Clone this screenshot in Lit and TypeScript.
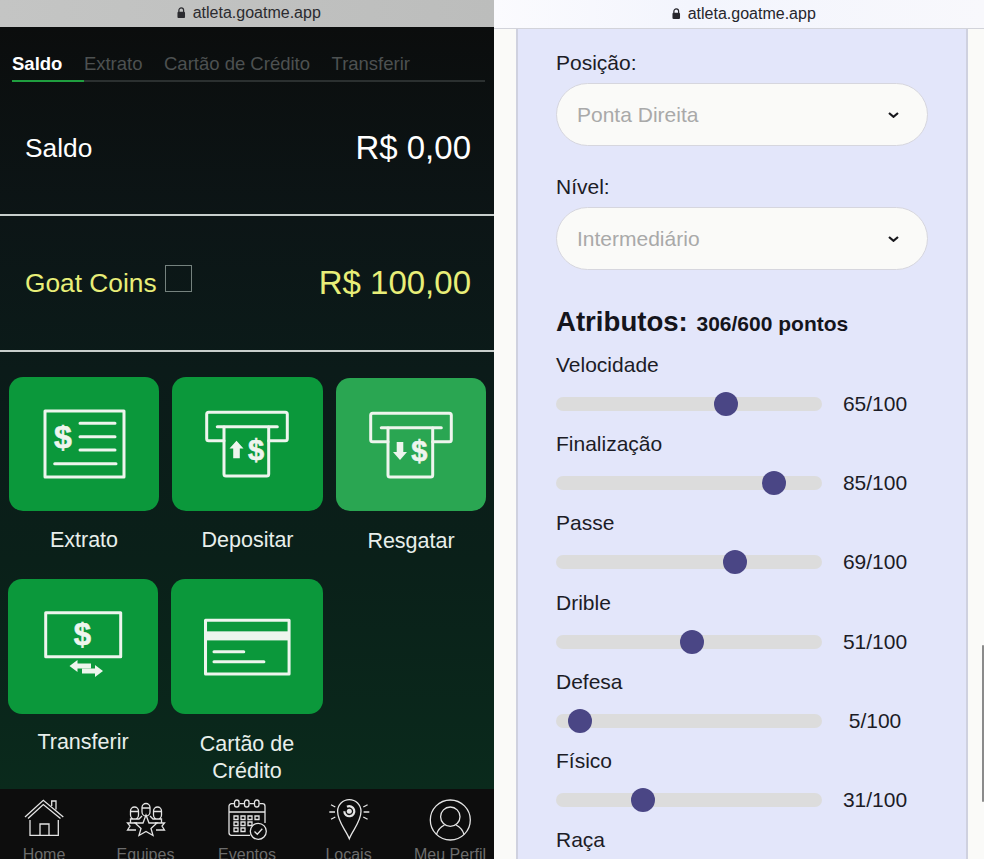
import { LitElement, html, css, svg } from "lit";
import { customElement } from "lit/decorators.js";

const lock = html`<svg class="lock" viewBox="0 0 9 12" width="8.500" height="11.500"><path d="M2 5.500V3.400a2.500 2.500 0 0 1 5 0v2.100" fill="none" stroke="currentColor" stroke-width="1.300"/><rect x="0.500" y="5" width="8" height="6.600" rx="1.200" fill="currentColor"/></svg>`;

const atm = (arrow: string, dx: number) => svg`
  <path class="ln" d="M52 63.700H36.700a2 2 0 0 1-2-2V37.300a2 2 0 0 1 2-2H113.300a2 2 0 0 1 2 2V61.700a2 2 0 0 1-2 2H96.700"/>
  <path class="ln" d="M52 50V97a2 2 0 0 0 2 2H94.700a2 2 0 0 0 2-2V50"/>
  <path class="ln" d="M45.300 49.700H105.300"/>
  <polygon class="fl" points=${arrow}/>
  <text class="dollar" x=${dx} y="83" font-size="29">$</text>`;

const tileIcons: Record<string, unknown> = {
  Extrato: svg`
    <rect class="ln" x="36" y="34" width="79" height="66"/>
    <path class="ln" d="M71 46.300H106M71 59.700H106M71 73H106M45.700 86.700H107"/>
    <text class="dollar" x="54" y="71" font-size="32">$</text>`,
  Depositar: atm("64.500,63.700 71.500,71.500 67.800,71.500 67.800,81.300 61.200,81.300 61.200,71.500 57.500,71.500", 84),
  Resgatar: atm("64,82 71,74 67.300,74 67.300,64 60.700,64 60.700,74 57,74", 83.300),
  Transferir: svg`
    <rect class="ln" x="37.700" y="33.700" width="75" height="44"/>
    <text class="dollar" x="74.300" y="66" font-size="31">$</text>
    <polygon class="fl" points="61.500,87 69.500,81 69.500,84.500 83,84.500 83,89.500 69.500,89.500 69.500,93"/>
    <polygon class="fl" points="95,92 87,86 87,89.500 74,89.500 74,94.500 87,94.500 87,98"/>`,
  "Cartão de Crédito": svg`
    <rect class="ln" x="34.300" y="41" width="83" height="53.300"/>
    <rect class="fl" x="34.300" y="52" width="83" height="9"/>
    <path class="ln" d="M42.700 72.300H72.300M42.700 82.300H92.300"/>`,
};

const navIcons = [
  {
    label: "Home",
    icon: svg`<path d="M3 19 21.300 2.300 41.300 19M6 20.500 21.300 6.500 38.500 20.500M29.700 8V3H34V11.500M8 22V37.300H36.300V22M18 37.300V26H27V37.300"/>`,
  },
  {
    label: "Equipes",
    icon: svg`<path d="M22 17 25 25 33 25 27 30.500 29 37.500 22 33.500 15 37.500 17 30.500 11 25 19 25Z"/>
      <path d="M13 25H3.500L6 28 3.500 32H12M31 25H40.500L38 28 40.500 32H32"/>
      <path d="M18 9.500a4 4 0 0 1 8 0V14a4 4 0 0 1-8 0ZM18 10H26M6.500 13a4 4 0 0 1 8 0V17a4 4 0 0 1-8 0ZM6.500 13.500H14.500M29.500 13a4 4 0 0 1 8 0V17a4 4 0 0 1-8 0ZM29.500 13.500H37.500M6.500 25V21H15L18 18M37.500 25V21H29L26 18"/>`,
  },
  {
    label: "Eventos",
    icon: svg`<path d="M9 5.700H6.500A2.500 2.500 0 0 0 4 8.200V34.800A2.500 2.500 0 0 0 6.500 37.300H25M14.500 5.700H19M24.500 5.700H29M34.500 5.700H37.500A2.500 2.500 0 0 1 40 8.200V25M4 14H40"/>
      <rect x="9.500" y="2" width="4.500" height="7" rx="2.200"/><rect x="19.500" y="2" width="4.500" height="7" rx="2.200"/><rect x="29.500" y="2" width="4.500" height="7" rx="2.200"/>
      <path d="M9 18h4v3.500H9ZM16 18h4v3.500H16ZM23 18h4v3.500H23ZM30 18h4v3.500H30ZM9 24h4v3.500H9ZM16 24h4v3.500H16ZM23 24h4v3.500H23ZM9 30h4v3.500H9ZM16 30h4v3.500H16Z"/>
      <circle class="cover" cx="33.300" cy="33.300" r="8"/><path d="M29.500 33.500 32.300 36.300 37.300 30.800"/>`,
  },
  {
    label: "Locais",
    icon: svg`<path d="M22.300 40.700C19 32 10.600 24 10.600 13.300A11.700 11.700 0 0 1 34 13.300C34 24 25.600 32 22.300 40.700Z"/>
      <path class="thick" d="M17.300 13.300A5 5 0 1 0 20 8.800"/><circle class="dot" cx="22.300" cy="13.300" r="2.500"/>
      <path d="M4 6.700 8.300 9M2.300 14H8M4 21.300 8.300 19M40.600 6.700 36.300 9M42.300 14H36.600M40.600 21.300 36.300 19"/>`,
  },
  {
    label: "Meu Perfil",
    icon: svg`<circle cx="22.300" cy="22" r="20"/><circle cx="22.300" cy="18.700" r="9.700"/>
      <path d="M8.500 36.500C10 31 13.500 28.500 16.500 27M36 36.500C34.500 31 31 28.500 28 27"/>`,
  },
];

const attrs: [string, number][] = [
  ["Velocidade", 65],
  ["Finalização", 85],
  ["Passe", 69],
  ["Drible", 51],
  ["Defesa", 5],
  ["Físico", 31],
];

const chevron = html`<svg class="chev" viewBox="0 0 11 6" width="11" height="6"><path d="M1 1 5.500 4.800 10 1"/></svg>`;

@customElement("app-root")
export class AppRoot extends LitElement {
  static styles = css`
    :host {
      display: grid;
      grid-template-columns: 494px 490px;
      width: 984px;
      height: 859px;
      overflow: hidden;
      position: relative;
      font-family: "Liberation Sans", Arial, sans-serif;
    }
    * { box-sizing: border-box; }
    .phone { height: 859px; display: flex; flex-direction: column; overflow: hidden; }
    .bar {
      display: flex; align-items: center; justify-content: center; gap: 7px;
      font-size: 16px; flex: none; color: #2b2b2f;
    }
    .lock { flex: none; }
    .left .bar { height: 27px; background: linear-gradient(90deg, #c4c5c4, #bcbdbc); padding: 0 0 2px 4px; }
    .right .bar { height: 29px; background: linear-gradient(90deg, #fbfbfe, #f3f5fd 40%, #f8f8fc); border-bottom: 1.500px solid #d2d3da; color: #26262c; padding-left: 10px; }

    .dark {
      flex: 1; min-height: 0; display: flex; flex-direction: column;
      background: linear-gradient(180deg, #0b0d0d 0%, #0c1516 25%, #0b1b19 45%, #0a2019 70%, #0a2a1c 100%);
    }
    .tabs {
      display: flex; height: 55px; margin: 0 9px 0 12px;
      border-bottom: 2px solid #2b3030; flex: none; align-items: flex-end;
    }
    .tab {
      padding-right: 21.500px; font-size: 18.500px; color: #4d5151; line-height: 26px;
      margin-bottom: -2px; height: 31px; border-bottom: 2px solid transparent;
    }
    .tab.active { color: #fff; font-weight: 700; border-bottom-color: #1f9e3f; }
    .row {
      display: flex; align-items: center; justify-content: space-between; flex: none;
      padding: 0 23px 0 25px; color: #fff; border-bottom: 2px solid #c8cecc;
    }
    .row.one { height: 134px; }
    .row.two { height: 136px; color: #e8ee78; }
    .name { font-size: 26.300px; display: flex; align-items: center; }
    .amount { font-size: 33px; }
    .check { width: 27px; height: 27px; border: 1px solid #75827e; margin: 0 0 9px 8px; }

    .cells { display: flex; gap: 13px; flex: none; }
    .cells.a { margin: 25px 0 0 9px; height: 202px; }
    .cells.b { margin-left: 8px; }
    .cell { width: 150px; display: flex; flex-direction: column; align-items: center; }
    .cell.wide { width: 151px; }
    .cells.b .cell.wide { width: 152px; }
    .tile { width: 100%; height: 134px; border-radius: 14px; background: #0b983b; display: block; flex: none; }
    .cells.b .tile { height: 135px; }
    .tile.light { background: #2aa652; height: 133px; margin-top: 1px; }
    .ln { fill: none; stroke: #eef5ee; stroke-width: 3px; stroke-linejoin: round; stroke-linecap: round; }
    .fl { fill: #eef5ee; stroke: none; }
    .dollar { fill: #eef5ee; stroke: #eef5ee; stroke-width: 0.600px; font-weight: 700; text-anchor: middle; font-family: "Liberation Sans", Arial, sans-serif; }
    .lab { font-size: 21.500px; line-height: 27px; margin-top: 16px; color: #e8efeb; text-align: center; }
    .cells.b .lab { margin-top: 15px; }
    .lab.low, .cells.b .lab.low { margin-top: 17px; }

    nav {
      flex: none; height: 70px; background: #0d0d0d; display: grid;
      grid-template-columns: repeat(5, 101.500px); justify-content: center; overflow: hidden;
      padding-top: 9px;
    }
    .item { display: flex; flex-direction: column; align-items: center; color: #6c6c6c; font-size: 16px; white-space: nowrap; }
    .item svg { width: 44px; height: 44px; flex: none; overflow: visible; margin-bottom: 4px; }
    .item svg * { fill: none; stroke: #e4e4e4; stroke-width: 1.300px; }
    .item svg .thick { stroke-width: 2.200px; }
    .item svg .dot { fill: #e4e4e4; stroke: none; }
    .item svg .cover { fill: #0d0d0d; }

    .right { background: #fafaf8; }
    .panel {
      flex: 1; margin-left: 22px; width: 452px;
      background: #e3e6fa; border-left: 2px solid #cfd1df; border-right: 2px solid #cfd1df;
      padding: 22px 0 0 38px; color: #1c1c26; font-size: 21px; overflow: hidden;
    }
    .fl-label { line-height: 24px; }
    .select {
      width: 372px; height: 63px; margin-top: 8px; border-radius: 32px;
      background: #fafaf8; border: 1.500px solid #d6d6de; display: flex; align-items: center;
      justify-content: space-between; padding: 0 28px 0 20px; color: #a9a9a9; margin-bottom: 29px;
    }
    .chev { fill: none; stroke: #17171c; stroke-width: 2.200px; }
    .select.last { margin-bottom: 36px; }
    h2 { margin: 0 0 13px; font-size: 27.600px; line-height: 32px; color: #15151c; font-weight: 700; }
    h2 span { font-size: 21px; margin-left: 1px; }
    .attr { height: 79.200px; }
    .slider { display: flex; align-items: center; height: 24px; margin-top: 15px; gap: 20px; }
    .track { width: 266px; height: 14px; border-radius: 7px; background: #dcdcdc; position: relative; flex: none; }
    .thumb { position: absolute; top: -5px; width: 24px; height: 24px; border-radius: 50%; background: #4a4685; }
    .value { width: 66px; text-align: center; }
    .scroll { position: absolute; right: 0; top: 645px; width: 2px; height: 157px; background: #8b8b8b; border-radius: 1px; }
  `;

  private cell(name: string, cls = "", light = false, low = false) {
    return html`<div class="cell ${cls}">
      <svg class="tile ${light ? "light" : ""}" viewBox="0 0 ${cls ? 151 : 150} ${light ? 133 : 134}" preserveAspectRatio="xMidYMin meet">${tileIcons[name]}</svg>
      <div class="lab ${low ? "low" : ""}">${name}</div>
    </div>`;
  }

  render() {
    return html`
      <section class="phone left">
        <div class="bar">${lock}<span>atleta.goatme.app</span></div>
        <div class="dark">
          <div class="tabs">
            <div class="tab active">Saldo</div>
            <div class="tab">Extrato</div>
            <div class="tab">Cartão de Crédito</div>
            <div class="tab">Transferir</div>
          </div>
          <div class="row one"><span class="name">Saldo</span><span class="amount">R$ 0,00</span></div>
          <div class="row two"><span class="name">Goat Coins<span class="check"></span></span><span class="amount">R$ 100,00</span></div>
          <div class="cells a">
            ${this.cell("Extrato")}${this.cell("Depositar", "wide")}${this.cell("Resgatar", "", true, true)}
          </div>
          <div class="cells b">
            ${this.cell("Transferir")}${this.cell("Cartão de Crédito", "wide", false, true)}
          </div>
        </div>
        <nav>
          ${navIcons.map((n) => html`<div class="item"><svg viewBox="0 0 44 44">${n.icon}</svg><span>${n.label}</span></div>`)}
        </nav>
      </section>
      <section class="phone right">
        <div class="bar">${lock}<span>atleta.goatme.app</span></div>
        <div class="panel">
          <div class="fl-label">Posição:</div>
          <div class="select"><span>Ponta Direita</span>${chevron}</div>
          <div class="fl-label">Nível:</div>
          <div class="select last"><span>Intermediário</span>${chevron}</div>
          <h2>Atributos: <span>306/600 pontos</span></h2>
          ${attrs.map(
            ([n, v]) => html`<div class="attr">
              <div class="fl-label">${n}</div>
              <div class="slider">
                <div class="track"><div class="thumb" style="left:${(v / 100) * 242 + 0.2}px"></div></div>
                <div class="value">${v}/100</div>
              </div>
            </div>`
          )}
          <div class="fl-label">Raça</div>
        </div>
      </section>
      <div class="scroll"></div>
    `;
  }
}
